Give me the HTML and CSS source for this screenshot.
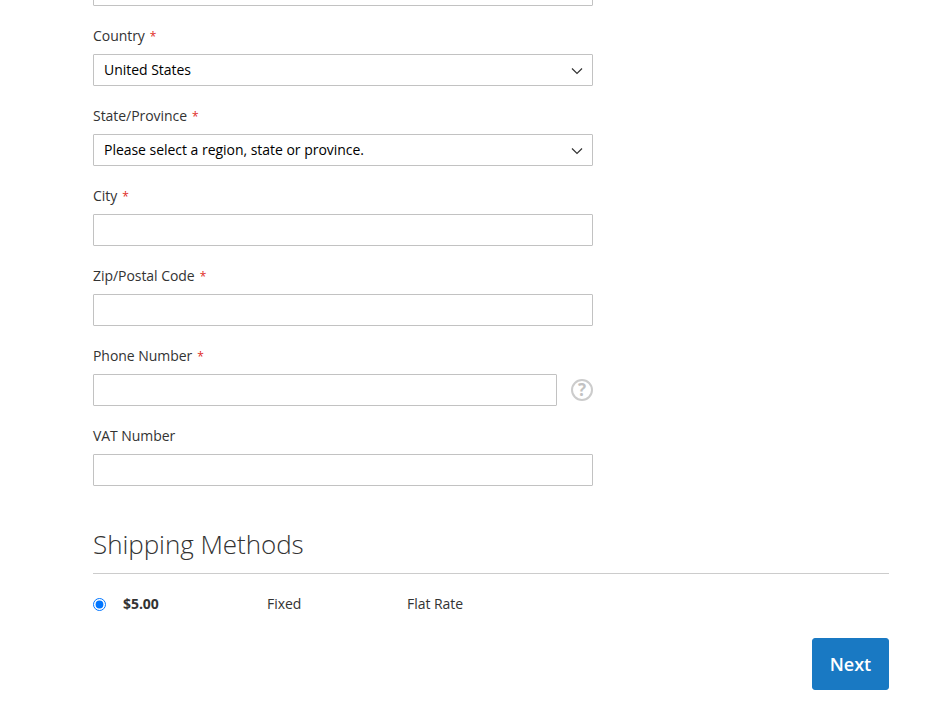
FILE: index.html
```html
<!DOCTYPE html>
<html lang="en">
<head>
  <meta charset="UTF-8" />
  <meta name="viewport" content="width=device-width, initial-scale=1.0"/>
  <title>Checkout</title>
  <link rel="stylesheet" href="styles.css">
</head>
<body>
  <div class="checkout">
    <form class="address-form">
      <div class="field">
        <input class="text-input" type="text">
      </div>
      <div class="field">
        <label class="field-label required">Country</label>
        <div class="select-wrap">
          <select class="select-input">
            <option>United States</option>
          </select>
          <svg class="chevron" width="12" height="8" viewBox="0 0 12 8"><path d="M1 1.5 L6 6.5 L11 1.5" fill="none" stroke="#333" stroke-width="1.2"/></svg>
        </div>
      </div>
      <div class="field">
        <label class="field-label required">State/Province</label>
        <div class="select-wrap">
          <select class="select-input">
            <option>Please select a region, state or province.</option>
          </select>
          <svg class="chevron" width="12" height="8" viewBox="0 0 12 8"><path d="M1 1.5 L6 6.5 L11 1.5" fill="none" stroke="#333" stroke-width="1.2"/></svg>
        </div>
      </div>
      <div class="field">
        <label class="field-label required">City</label>
        <input class="text-input" type="text">
      </div>
      <div class="field">
        <label class="field-label required">Zip/Postal Code</label>
        <input class="text-input" type="text">
      </div>
      <div class="field">
        <label class="field-label required">Phone Number</label>
        <div class="input-with-help">
          <input class="text-input" type="text">
          <span class="help-icon">?</span>
        </div>
      </div>
      <div class="field">
        <label class="field-label">VAT Number</label>
        <input class="text-input" type="text">
      </div>
    </form>

    <h2 class="section-title">Shipping Methods</h2>
    <div class="shipping-row">
      <input class="shipping-radio" type="radio" name="shipping" checked>
      <span class="price">$5.00</span>
      <span>Fixed</span>
      <span>Flat Rate</span>
    </div>
    <div class="actions">
      <button class="next-btn" type="button">Next</button>
    </div>
  </div>
</body>
</html>
```

FILE: styles.css
```css
* {
  margin: 0;
  padding: 0;
  box-sizing: border-box;
  font-family: 'Open Sans', sans-serif;
  text-rendering: optimizeLegibility;
}

html, body {
  height: 100%;
  overflow: hidden;
}

body {
  background: #fff;
  color: #333;
  font-size: 14px;
  line-height: 20px;
  letter-spacing: -0.05px;
}

/* page is scrolled, the first input is cut by the top edge */
.checkout {
  margin-top: -26px;
  padding: 0 41px 0 93px;
}

.address-form {
  width: 500px;
}

.field {
  margin-bottom: 20px;
}

.field-label {
  display: block;
  margin-bottom: 8px;
}

.required::after {
  content: "*";
  color: #e02b27;
  margin-left: 5px;
  font-size: 12px;
  line-height: 1;
}

.text-input,
.select-input {
  display: block;
  width: 100%;
  height: 32px;
  background: #fff;
  border: 1px solid #c2c2c2;
  border-radius: 1px;
  font-size: 14px;
  color: #000;
}

.select-input {
  padding: 0 25px 2px 10px;
  letter-spacing: -0.03px;
  appearance: none;
}

.select-wrap {
  position: relative;
}

.chevron {
  position: absolute;
  top: 13px;
  right: 10px;
}

.input-with-help {
  display: flex;
  align-items: center;
  justify-content: space-between;
}

.input-with-help .text-input {
  width: 464px;
}

.help-icon {
  width: 22px;
  height: 22px;
  border: 2px solid #ccc;
  border-radius: 50%;
  color: #c2c2c2;
  font-size: 17px;
  font-weight: 700;
  line-height: 18px;
  text-align: center;
}

.section-title {
  margin-top: 38px;
  padding-bottom: 9px;
  border-bottom: 1px solid #ccc;
  font-size: 26px;
  font-weight: 300;
  line-height: 40px;
}

.shipping-row {
  display: grid;
  grid-template-columns: 30px 144px 140px 1fr;
  align-items: center;
  margin-top: 20px;
}

.shipping-radio {
  justify-self: start;
  margin: 0;
}

.price {
  font-weight: 700;
}

.actions {
  display: flex;
  justify-content: flex-end;
  margin-top: 24px;
}

.next-btn {
  width: 77px;
  height: 52px;
  background: #1979c3;
  border: 1px solid #1979c3;
  border-radius: 3px;
  color: #fff;
  font-size: 18px;
  font-weight: 600;
}
```
